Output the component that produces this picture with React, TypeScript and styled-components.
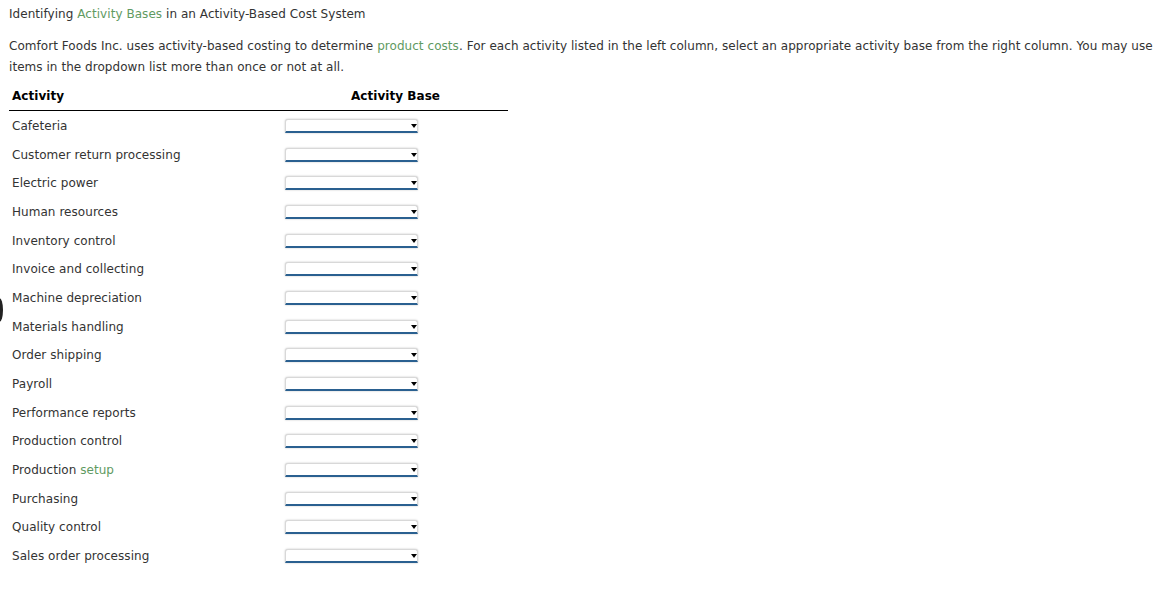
import React from "react";
import styled, { createGlobalStyle } from "styled-components";

const Global = createGlobalStyle`
  html, body { margin: 0; padding: 0; background: #fff; }
  body {
    font-family: "DejaVu Sans", Verdana, sans-serif;
    font-size: 12px;
    letter-spacing: 0.05px;
    color: #333;
  }
`;

const Page = styled.div`
  position: relative;
  padding: 6px 9px 0 9px;
`;

const EdgeMark = styled.div`
  position: absolute;
  left: -4px;
  top: 298px;
  width: 7px;
  height: 24px;
  border-radius: 50%;
  background: #222;
  filter: blur(0.6px);
`;

const Title = styled.div`
  line-height: 16px;
  margin-bottom: 14px;
`;

const Paragraph = styled.p`
  margin: 0 0 10px 0;
  line-height: 21px;
`;

const Term = styled.span`
  color: #5f9a62;
`;

const Table = styled.div`
  width: 499px;
  display: grid;
  grid-template-columns: 274px 225px;
`;

const HeadCell = styled.div<{ $center?: boolean }>`
  font-weight: bold;
  color: #000;
  padding: 0 3px 6px 3px;
  line-height: 16px;
  text-align: ${(p) => (p.$center ? "center" : "left")};
  border-bottom: 1px solid #000;
`;

const LabelCell = styled.div`
  padding: 1px 3px 0 3px;
  height: 28.7px;
  box-sizing: border-box;
  display: flex;
  align-items: center;
`;

const Label = styled.span`
  white-space: nowrap;
`;

const SelectCell = styled.div`
  height: 28.7px;
  box-sizing: border-box;
  padding: 1px 0 0 2px;
  display: flex;
  align-items: center;
`;

const FakeSelect = styled.div`
  position: relative;
  width: 133px;
  height: 14px;
  background: #fff;
  border: 1px solid #d8d8d8;
  border-bottom: 2px solid #2a6090;
  border-radius: 3px 3px 0 0;
  box-shadow: 0 0 2px rgba(0, 0, 0, 0.25);
  box-sizing: border-box;
`;

const Caret = styled.span`
  position: absolute;
  right: 0;
  top: 4px;
  width: 0;
  height: 0;
  border-left: 3.5px solid transparent;
  border-right: 3.5px solid transparent;
  border-top: 4px solid #000;
`;

const activities: React.ReactNode[] = [
  "Cafeteria",
  "Customer return processing",
  "Electric power",
  "Human resources",
  "Inventory control",
  "Invoice and collecting",
  "Machine depreciation",
  "Materials handling",
  "Order shipping",
  "Payroll",
  "Performance reports",
  "Production control",
  <>
    Production <Term>setup</Term>
  </>,
  "Purchasing",
  "Quality control",
  "Sales order processing",
];

export default function App() {
  return (
    <>
      <Global />
      <Page>
        <EdgeMark />
        <Title>
          Identifying <Term>Activity Bases</Term> in an Activity-Based Cost System
        </Title>
        <Paragraph>
          Comfort Foods Inc. uses activity-based costing to determine{" "}
          <Term>product costs</Term>. For each activity listed in the left column, select an
          appropriate activity base from the right column. You may use items in the dropdown
          list more than once or not at all.
        </Paragraph>
        <Table>
          <HeadCell>Activity</HeadCell>
          <HeadCell $center>Activity Base</HeadCell>
          {activities.map((a, i) => (
            <React.Fragment key={i}>
              <LabelCell>
                <Label>{a}</Label>
              </LabelCell>
              <SelectCell>
                <FakeSelect>
                  <Caret />
                </FakeSelect>
              </SelectCell>
            </React.Fragment>
          ))}
        </Table>
      </Page>
    </>
  );
}
